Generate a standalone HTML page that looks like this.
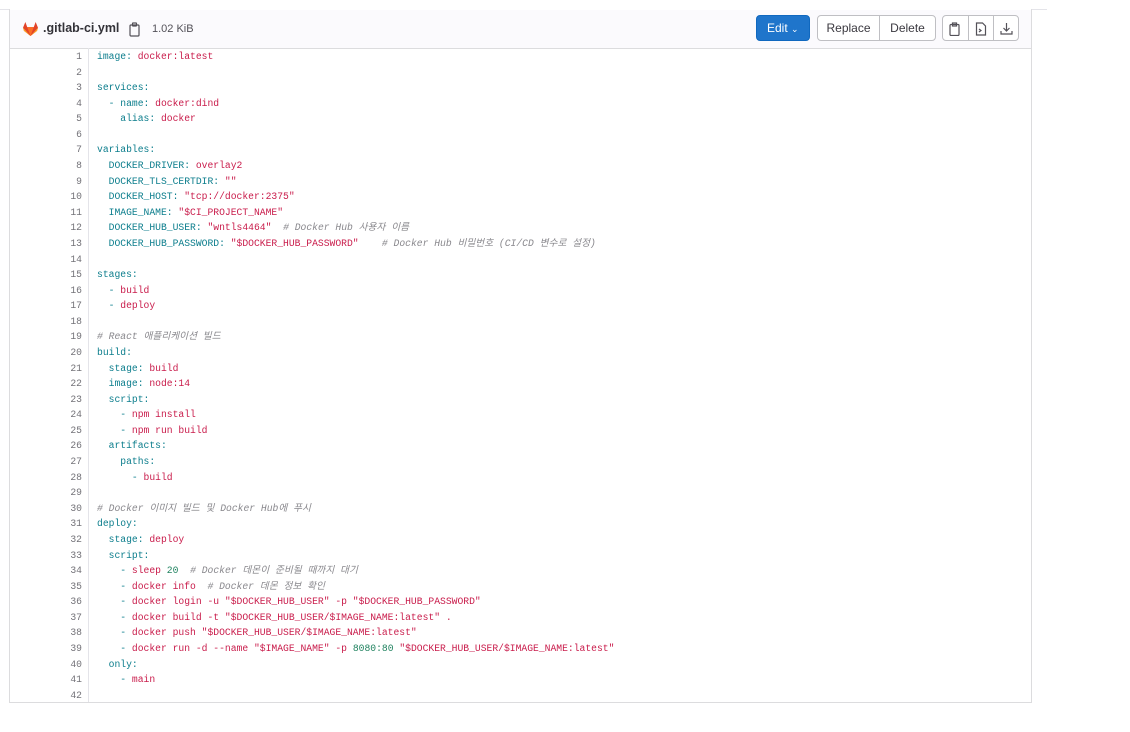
<!DOCTYPE html>
<html><head><meta charset="utf-8"><style>
body{margin:0;background:#fff;width:1130px;height:732px;overflow:hidden;font-family:"Liberation Sans",sans-serif}
.topline{position:absolute;left:0;top:9px;width:1047px;height:1px;background:#e4e4e9}
.card{position:absolute;left:9px;top:9px;width:1021px;height:693px;border:1px solid #dcdcde;border-top:none;background:#fff}
.hdr{position:absolute;left:0;top:1px;width:1021px;height:38px;background:#fbfafd;border-bottom:1px solid #dcdcde}
.fname{position:absolute;left:33px;top:11px;font-size:12.5px;font-weight:bold;color:#333238}
.size{position:absolute;left:142px;top:13px;font-size:11px;color:#535158}
.btn{position:absolute;top:5px;height:26px;border:1px solid #bfbfc3;border-radius:4px;background:#fff;font-size:12px;color:#3a383f;line-height:24px;box-sizing:border-box}
.gutter{position:absolute;left:0;top:39px;width:78px;height:654px;border-right:1px solid #e4e4e9}
pre{margin:0;font-family:"Liberation Mono","Noto Sans CJK KR",monospace;font-size:9.7px;line-height:15.585px}
.nums{position:absolute;left:0;top:40px;width:72px;text-align:right;color:#737278}
.code{position:absolute;left:87px;top:40px;color:#0b7d8c}
.s{color:#c91c4b}.c{color:#89888d;font-style:italic}.n{color:#218360}
</style></head><body>
<div class="topline"></div>
<div class="card">
<div class="hdr">
<svg style="position:absolute;left:13px;top:12px" width="15" height="14" viewBox="0 0 16 15"><path d="M8 15L1 9.5 0 6 2.5 0 4.5 5.5h7L13.5 0 16 6 15 9.5z" fill="#e24329"/><path d="M8 15L4.5 5.5h7z" fill="#fc6d26"/><path d="M0 6l8 9-7-5.5z" fill="#fca326"/><path d="M16 6l-8 9 7-5.5z" fill="#fca326"/></svg>
<div class="fname">.gitlab-ci.yml</div>
<svg style="position:absolute;left:119px;top:12px" width="12" height="15" viewBox="0 0 12 15" fill="none" stroke="#535158" stroke-width="1.2"><rect x="1" y="3" width="9" height="11" rx="1"/><rect x="3.5" y="1" width="4" height="3" rx=".5"/></svg>
<div class="size">1.02 KiB</div>
<div class="btn" style="left:746px;width:54px;background:#1f75cb;border-color:#1068bf;color:#fff;padding-left:10px">Edit <span style="font-size:9px">&#8964;</span></div>
<div class="btn" style="left:807px;width:63px;border-radius:4px 0 0 4px;text-align:center">Replace</div>
<div class="btn" style="left:869px;width:57px;border-radius:0 4px 4px 0;text-align:center">Delete</div>
<div class="btn" style="left:932px;width:27px;border-radius:4px 0 0 4px"></div>
<div class="btn" style="left:958px;width:26px;border-radius:0"></div>
<div class="btn" style="left:983px;width:26px;border-radius:0 4px 4px 0"></div>
<svg style="position:absolute;left:939px;top:12px" width="12" height="14" viewBox="0 0 12 14" fill="none" stroke="#535158" stroke-width="1.2"><rect x="1" y="2.5" width="9" height="11" rx="1"/><rect x="3.5" y="1" width="4" height="3"/></svg>
<svg style="position:absolute;left:965px;top:12px" width="12" height="14" viewBox="0 0 12 14" fill="none" stroke="#535158" stroke-width="1.2"><path d="M1.5 1h6l3 3v9h-9z"/><path d="M4 7l2 1.5L4 10"/></svg>
<svg style="position:absolute;left:990px;top:12px" width="13" height="13" viewBox="0 0 13 13" fill="none" stroke="#535158" stroke-width="1.2"><path d="M6.5 1v8M3.5 6l3 3 3-3M1 9v3h11V9"/></svg>
</div>
<div class="gutter"></div>
<pre class="nums">1
2
3
4
5
6
7
8
9
10
11
12
13
14
15
16
17
18
19
20
21
22
23
24
25
26
27
28
29
30
31
32
33
34
35
36
37
38
39
40
41
42</pre>
<pre class="code">image: <span class="s">docker:latest</span>

services:
  - name: <span class="s">docker:dind</span>
    alias: <span class="s">docker</span>

variables:
  DOCKER_DRIVER: <span class="s">overlay2</span>
  DOCKER_TLS_CERTDIR: <span class="s">""</span>
  DOCKER_HOST: <span class="s">"tcp://docker:2375"</span>
  IMAGE_NAME: <span class="s">"$CI_PROJECT_NAME"</span>
  DOCKER_HUB_USER: <span class="s">"wntls4464"</span>  <span class="c"># Docker Hub 사용자 이름</span>
  DOCKER_HUB_PASSWORD: <span class="s">"$DOCKER_HUB_PASSWORD"</span>    <span class="c"># Docker Hub 비밀번호 (CI/CD 변수로 설정)</span>

stages:
  - <span class="s">build</span>
  - <span class="s">deploy</span>

<span class="c"># React 애플리케이션 빌드</span>
build:
  stage: <span class="s">build</span>
  image: <span class="s">node:14</span>
  script:
    - <span class="s">npm install</span>
    - <span class="s">npm run build</span>
  artifacts:
    paths:
      - <span class="s">build</span>

<span class="c"># Docker 이미지 빌드 및 Docker Hub에 푸시</span>
deploy:
  stage: <span class="s">deploy</span>
  script:
    - <span class="s">sleep</span> <span class="n">20</span>  <span class="c"># Docker 데몬이 준비될 때까지 대기</span>
    - <span class="s">docker info</span>  <span class="c"># Docker 데몬 정보 확인</span>
    - <span class="s">docker login -u "$DOCKER_HUB_USER" -p "$DOCKER_HUB_PASSWORD"</span>
    - <span class="s">docker build -t "$DOCKER_HUB_USER/$IMAGE_NAME:latest" .</span>
    - <span class="s">docker push "$DOCKER_HUB_USER/$IMAGE_NAME:latest"</span>
    - <span class="s">docker run -d --name "$IMAGE_NAME" -p </span><span class="n">8080:80</span><span class="s"> "$DOCKER_HUB_USER/$IMAGE_NAME:latest"</span>
  only:
    - <span class="s">main</span>
</pre>
</div>
</body></html>
